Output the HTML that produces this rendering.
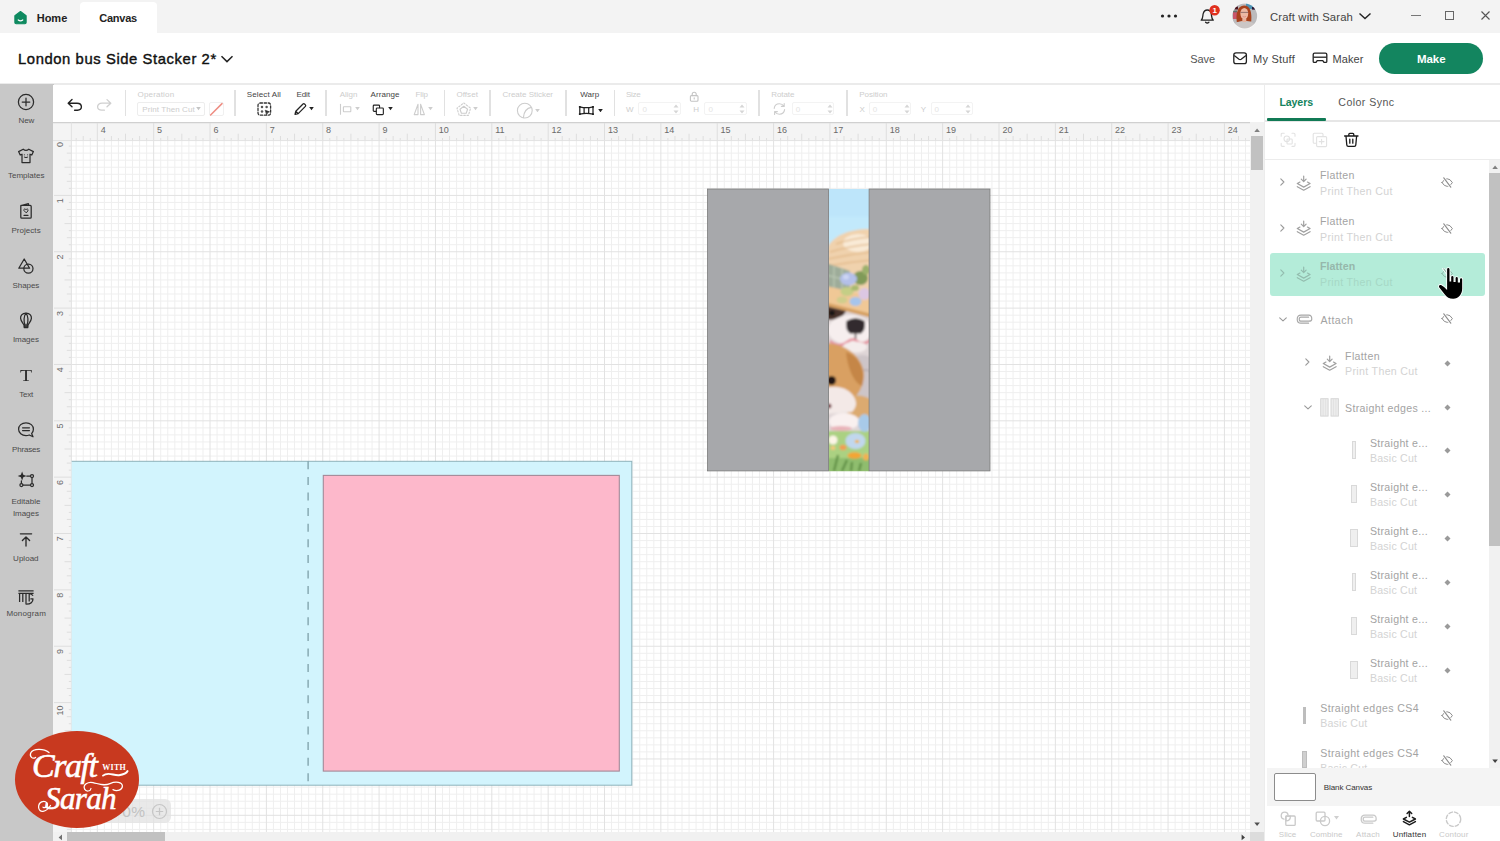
<!DOCTYPE html>
<html><head><meta charset="utf-8"><title>Design Space</title>
<style>
*{box-sizing:border-box;margin:0;padding:0}
html,body{width:1500px;height:841px;overflow:hidden;background:#fff;font-family:"Liberation Sans",sans-serif;color:#333}
div,svg{position:absolute}
.t{white-space:nowrap;line-height:1}
#titlebar{left:0;top:0;width:1500px;height:33px;background:#f3f3f3}
#tabcanvas{left:80px;top:2px;width:76.8px;height:31px;background:#fff;border-radius:4px 4px 0 0}
#header{left:0;top:33px;width:1500px;height:50px;background:#fff}
#hline{left:0;top:83px;width:1500px;height:2px;background:#ebebeb}
#sidebar{left:0;top:84px;width:53.5px;height:757px;background:#c8c8c8}
#toolbar{left:53px;top:85px;width:1211px;height:37px;background:#fff}
#panel{left:1264px;top:85px;width:236px;height:756px;background:#fff;border-left:1px solid #ececec}
.vd{width:1.5px;background:#e1e1e1;top:92px;height:24px}
</style></head><body>
<div id="titlebar"></div><div id="tabcanvas"></div><div id="header"></div><div id="hline"></div>
<svg style="left:13.3px;top:10.4px" width="15" height="15" viewBox="0 0 16 16"><path d="M8 1.6 L14 6.2 V13.3 Q14 14.6 12.7 14.6 H3.3 Q2 14.6 2 13.3 V6.2 Z" fill="#0f8a60" stroke="#0f8a60" stroke-width="1.2" stroke-linejoin="round"/><path d="M5.6 10.6 Q8 12.4 10.4 10.6" fill="none" stroke="#fff" stroke-width="1.3" stroke-linecap="round"/></svg>
<div class="t" style="left:36.70px;top:13.00px;font-size:11.00px;color:#222;font-weight:bold;letter-spacing:0.010px;">Home</div>
<div class="t" style="left:99.20px;top:13.00px;font-size:11.00px;color:#222;font-weight:bold;letter-spacing:-0.223px;">Canvas</div>
<div class="t" style="left:18.00px;top:52.00px;font-size:14.80px;color:#111;letter-spacing:0.589px;-webkit-text-stroke:0.40px #111;">London bus Side Stacker 2*</div>
<svg style="left:220px;top:54px" width="14" height="10" viewBox="0 0 14 10"><path d="M1.5 2.2 L7 7.6 L12.5 2.2" fill="none" stroke="#222" stroke-width="1.5"/></svg>
<svg style="left:1160px;top:13px" width="20" height="6"><circle cx="2.5" cy="3" r="1.6" fill="#222"/><circle cx="9" cy="3" r="1.6" fill="#222"/><circle cx="15.5" cy="3" r="1.6" fill="#222"/></svg>
<svg style="left:1198px;top:4px" width="26" height="24" viewBox="0 0 26 24"><path d="M3.2 16.2 C5.2 14.5 4.6 11.5 5.2 9.6 C5.9 7.2 7.4 6 9.2 6 C11.6 6 13 7.6 13.3 9.8 C13.6 12 13.4 14.6 15.3 16.2 Z" fill="none" stroke="#222" stroke-width="1.3" stroke-linejoin="round"/><path d="M7.6 18.2 Q9.2 19.8 10.9 18.2" fill="none" stroke="#222" stroke-width="1.3" stroke-linecap="round"/><circle cx="16.6" cy="6.2" r="5.2" fill="#e0301e"/></svg>
<div class="t" style="left:1212.60px;top:7.00px;font-size:8.00px;color:#fff;font-weight:bold;">1</div>
<svg style="left:1231px;top:2px" width="28" height="28" viewBox="1231 2 28 28"><defs><clipPath id="av"><circle cx="1244.7" cy="16" r="12.5"/></clipPath><filter id="avb" x="-20%" y="-20%" width="140%" height="140%"><feGaussianBlur stdDeviation="0.55"/></filter></defs><circle cx="1244.7" cy="16" r="13.1" fill="#fafafa"/><g clip-path="url(#av)"><g filter="url(#avb)"><rect x="1231" y="2" width="28" height="28" fill="#bcbbbd"/><rect x="1246" y="3" width="9" height="6" fill="#4f93b4"/><rect x="1233" y="12" width="5" height="7" fill="#c9566b"/><rect x="1234.500" y="6.500" width="3.500" height="3" fill="#4a1522"/><rect x="1252" y="7" width="3" height="2.600" fill="#2a1430"/><rect x="1233" y="10.500" width="4" height="1.800" fill="#5f6f6a"/><path d="M1236.800 22 C1235.600 14 1237.500 5.500 1244 5.500 C1250.500 5.500 1252 13 1251.200 21.500 Z" fill="#a8421e"/><ellipse cx="1244.300" cy="13.600" rx="3.900" ry="5.700" fill="#ecb9a3"/><path d="M1240.600 12.400 H1248" stroke="#8a6a66" stroke-width="0.900"/><path d="M1242.600 16.400 Q1244.300 17.600 1246 16.400" stroke="#d98a86" stroke-width="0.800" fill="none"/><path d="M1232 30 C1233 23 1238 21 1244.500 21 C1251 21 1256 23 1257.500 30 Z" fill="#cbc6c5"/><path d="M1242.300 19 H1246.300 V22 H1242.300 Z" fill="#e6b29d"/></g></g></svg>
<div class="t" style="left:1270.00px;top:12.00px;font-size:11.30px;color:#444;letter-spacing:0.124px;">Craft with Sarah</div>
<svg style="left:1358px;top:11px" width="14" height="10" viewBox="0 0 14 10"><path d="M1.5 2.4 L7 7.6 L12.5 2.4" fill="none" stroke="#222" stroke-width="1.4"/></svg>
<div style="left:1411px;top:15px;width:10px;height:1px;background:#777"></div>
<div style="left:1445px;top:11px;width:9px;height:9px;border:1px solid #666"></div>
<svg style="left:1480px;top:10px" width="11" height="11"><path d="M1.5 1.5 L9.5 9.5 M9.5 1.5 L1.5 9.5" stroke="#555" stroke-width="1.1"/></svg>
<div class="t" style="left:1190.30px;top:54.00px;font-size:11.00px;color:#555;letter-spacing:-0.093px;">Save</div>
<svg style="left:1232px;top:50px" width="16" height="16" viewBox="0 0 16 16"><rect x="1.8" y="2.8" width="12.6" height="10.8" rx="2.2" fill="none" stroke="#222" stroke-width="1.3"/><path d="M2.200 5.400 L7 9.200 Q8.100 9.900 9.200 9.200 L14 5.400" fill="none" stroke="#222" stroke-width="1.3"/></svg>
<div class="t" style="left:1253.00px;top:54.00px;font-size:11.00px;color:#444;letter-spacing:0.232px;">My Stuff</div>
<svg style="left:1312px;top:51px" width="16" height="14" viewBox="0 0 16 14"><path d="M2.6 2.2 H13.4 Q14.8 2.2 14.8 3.6 V10.4 Q14.8 11.4 13.8 11.4 H12 L10.8 9.6 H5.2 L4 11.4 H2.2 Q1.2 11.4 1.2 10.4 V3.6 Q1.2 2.2 2.6 2.2 Z" fill="none" stroke="#222" stroke-width="1.3" stroke-linejoin="round"/><path d="M1.4 6.2 H14.6" stroke="#222" stroke-width="1.3"/></svg>
<div class="t" style="left:1332.50px;top:54.00px;font-size:11.00px;color:#444;letter-spacing:0.087px;">Maker</div>
<div style="left:1379px;top:43px;width:104px;height:31px;border-radius:16px;background:#13855f"></div>
<div class="t" style="left:1417.00px;top:54.00px;font-size:11.50px;color:#fff;font-weight:bold;letter-spacing:-0.067px;">Make</div>
<div id="sidebar"></div>
<svg style="left:17px;top:93px" width="18" height="18" viewBox="0 0 18 18" fill="none" stroke="#2b2b2b" stroke-width="1.25" stroke-linecap="round" stroke-linejoin="round"><circle cx="9" cy="9" r="7.6"/><path d="M9 5.2V12.8M5.2 9H12.8"/></svg>
<div class="t" style="left:18.60px;top:117.00px;font-size:8.00px;color:#4a4a4a;letter-spacing:-0.101px;">New</div>
<svg style="left:17px;top:147px" width="18" height="18" viewBox="0 0 18 18" fill="none" stroke="#2b2b2b" stroke-width="1.25" stroke-linecap="round" stroke-linejoin="round"><path d="M6.2 2.2 L1.6 4.6 L3.2 8 L5 7.2 V15.6 H13 V7.2 L14.8 8 L16.4 4.6 L11.8 2.2 Q9 4.4 6.2 2.2 Z"/><path d="M7.4 7.8v.1M10.6 7.8v.1M7.4 10.2 Q9 11.2 10.6 10.2" stroke-width="1"/></svg>
<div class="t" style="left:7.90px;top:172.00px;font-size:8.00px;color:#4a4a4a;letter-spacing:0.027px;">Templates</div>
<svg style="left:18px;top:202px" width="16" height="18" viewBox="0 0 16 18" fill="none" stroke="#2b2b2b" stroke-width="1.25" stroke-linecap="round" stroke-linejoin="round"><path d="M3 3.6 L10.4 1.6 L10.6 3.2 M3 3.4 H12.2 Q13.2 3.4 13.2 4.4 V15.2 Q13.2 16.2 12.2 16.2 H3.8 Q2.8 16.2 2.8 15.2 V3.6"/><path d="M8 10.6 L6 8.6 Q5.4 7.4 6.6 7 Q7.6 6.9 8 7.8 Q8.4 6.9 9.4 7 Q10.6 7.4 10 8.6 Z" stroke-width="1"/><path d="M6 13.4 H10" stroke-width="1.1"/></svg>
<div class="t" style="left:11.40px;top:227.00px;font-size:8.00px;color:#4a4a4a;letter-spacing:0.050px;">Projects</div>
<svg style="left:17px;top:257px" width="18" height="18" viewBox="0 0 18 18" fill="none" stroke="#2b2b2b" stroke-width="1.25" stroke-linecap="round" stroke-linejoin="round"><path d="M7.2 2 L1.8 11.2 H12.6 Z"/><circle cx="11.4" cy="11.6" r="4.6"/></svg>
<div class="t" style="left:12.60px;top:282.00px;font-size:8.00px;color:#4a4a4a;letter-spacing:-0.072px;">Shapes</div>
<svg style="left:18px;top:312px" width="16" height="18" viewBox="0 0 16 18" fill="none" stroke="#2b2b2b" stroke-width="1.25" stroke-linecap="round" stroke-linejoin="round"><path d="M8 1.2 C3.8 1.2 2.4 4.2 2.6 6.4 C2.9 9.4 5 11 6 13 H10 C11 11 13.100 9.4 13.4 6.4 C13.600 4.200 12.200 1.2 8 1.2 Z"/><path d="M8 1.4 C5.600 3.400 5.600 9.600 7 13 M8 1.4 C10.4 3.4 10.4 9.600 9 13"/><path d="M6.2 13 V15.6 H9.8 V13" /><path d="M6.200 14.400 H9.800" stroke-width="1"/></svg>
<div class="t" style="left:12.90px;top:336.00px;font-size:8.00px;color:#4a4a4a;letter-spacing:-0.039px;">Images</div>
<div class="t" style="left:19.700px;top:367px;font-family:'Liberation Serif',serif;font-size:17px;color:#2b2b2b;transform:scaleX(1.160);transform-origin:0 0">T</div>
<div class="t" style="left:19.30px;top:391.00px;font-size:8.00px;color:#4a4a4a;letter-spacing:-0.218px;">Text</div>
<svg style="left:17px;top:421px" width="18" height="18" viewBox="0 0 18 18" fill="none" stroke="#2b2b2b" stroke-width="1.25" stroke-linecap="round" stroke-linejoin="round"><path d="M9 1.8 C4.6 1.8 1.6 4.6 1.6 8.2 C1.6 11.8 4.8 14.6 9 14.6 C10.2 14.6 11.2 14.4 12.2 14 L16 15.8 L14.6 12.600 C15.800 11.400 16.400 9.900 16.400 8.200 C16.400 4.600 13.400 1.800 9 1.800 Z"/><path d="M5.6 6.800 H12.400 M5.600 9.600 H12.400" stroke-width="1.3"/></svg>
<div class="t" style="left:12.10px;top:446.00px;font-size:8.00px;color:#4a4a4a;letter-spacing:-0.207px;">Phrases</div>
<svg style="left:17px;top:471px" width="18" height="18" viewBox="0 0 18 18" fill="none" stroke="#2b2b2b" stroke-width="1.25" stroke-linecap="round" stroke-linejoin="round"><path d="M4.400 9.800 V14 M4.400 14 H15 M15 14 V5 M15 5 H9.800"/><circle cx="4.400" cy="14" r="1.500" fill="#c8c8c8"/><circle cx="15" cy="14" r="1.500" fill="#c8c8c8"/><circle cx="15" cy="5" r="1.500" fill="#c8c8c8"/><path d="M5.100 0.600 L6.300 3.800 L9.500 5 L6.300 6.200 L5.100 9.400 L3.900 6.200 L0.700 5 L3.900 3.800 Z" fill="#2b2b2b" stroke="none"/></svg>
<div class="t" style="left:11.40px;top:498.00px;font-size:8.00px;color:#4a4a4a;letter-spacing:0.011px;">Editable</div>
<div class="t" style="left:12.90px;top:510.00px;font-size:8.00px;color:#4a4a4a;letter-spacing:-0.039px;">Images</div>
<svg style="left:18px;top:532px" width="16" height="16" viewBox="0 0 16 16" fill="none" stroke="#2b2b2b" stroke-width="1.25" stroke-linecap="round" stroke-linejoin="round"><path d="M2.400 1.800 H13.600 M8 14 V5.2 M4.400 8.600 L8 5 L11.600 8.600" stroke-width="1.35"/></svg>
<div class="t" style="left:13.10px;top:555.00px;font-size:8.00px;color:#4a4a4a;letter-spacing:0.025px;">Upload</div>
<svg style="left:17px;top:589px" width="18" height="17" viewBox="0 0 18 17" fill="none" stroke="#2b2b2b" stroke-width="1.25" stroke-linecap="round" stroke-linejoin="round"><path d="M1.4 1.800 H16.600 M1.400 4.400 H16.600 M2.600 4.400 V13 M5.800 4.400 V13 M9 4.400 V15.400" stroke-linecap="butt"/><path d="M16 6.800 C15 5 13.400 4.600 12.200 4.600 M12.200 4.500 V12.600 M9.200 15.200 C13.400 15.200 16 13 16 9.800 H13.400" stroke-linecap="butt"/></svg>
<div class="t" style="left:6.40px;top:610.00px;font-size:8.00px;color:#4a4a4a;letter-spacing:0.170px;">Monogram</div>
<div id="toolbar"></div>
<div class="vd" style="left:124.5px;top:90px;height:26px"></div>
<div class="vd" style="left:234px;top:90px;height:26px"></div>
<div class="vd" style="left:325px;top:90px;height:26px"></div>
<div class="vd" style="left:443.5px;top:90px;height:26px"></div>
<div class="vd" style="left:489px;top:90px;height:26px"></div>
<div class="vd" style="left:565px;top:90px;height:26px"></div>
<div class="vd" style="left:613.5px;top:90px;height:26px"></div>
<div class="vd" style="left:758.2px;top:90px;height:26px"></div>
<div class="vd" style="left:846px;top:90px;height:26px"></div>
<svg style="left:66px;top:97px" width="18" height="16" viewBox="0 0 18 16" fill="none" stroke="#222" stroke-width="1.4" stroke-linecap="round" stroke-linejoin="round"><path d="M6 2.600 L2.200 6.200 L6 9.800 M2.600 6.200 H11 C13.800 6.200 15.400 7.800 15.400 9.800 C15.400 11.800 13.800 13.200 11.400 13.200 H8.600"/></svg>
<svg style="left:95px;top:97px" width="18" height="16" viewBox="0 0 18 16" fill="none" stroke="#cfcfcf" stroke-width="1.3" stroke-linecap="round" stroke-linejoin="round"><path d="M12 2.600 L15.800 6.200 L12 9.800 M15.400 6.200 H7 C4.200 6.200 2.600 7.800 2.600 9.800 C2.600 11.800 4.200 13.200 6.600 13.200 H9.400"/></svg>
<div class="t" style="left:137.60px;top:91.00px;font-size:8.00px;color:#cdcdcd;letter-spacing:0.174px;">Operation</div>
<div style="left:137px;top:101.5px;width:68px;height:14.5px;border:1px solid #ededed;border-radius:2px"></div>
<div class="t" style="left:142.30px;top:106.00px;font-size:8.00px;color:#cdcdcd;letter-spacing:0.076px;">Print Then Cut</div>
<svg style="left:195.9px;top:107px" width="5" height="3.5"><path d="M0.200 0H4.800L2.500 3.300Z" fill="#c4c4c4"/></svg>
<div style="left:209px;top:101.500px;width:14.500px;height:14.500px;border:1px solid #f0f0f0;border-radius:2px"></div>
<svg style="left:209px;top:101.5px" width="14.5" height="14.5" viewBox="0 0 14.5 14.5" fill="none" stroke="#ee8d83" stroke-width="1.5" stroke-linecap="round" stroke-linejoin="round"><path d="M1.600 13 L13 1.600"/></svg>
<div class="t" style="left:246.80px;top:91.00px;font-size:8.00px;color:#444;letter-spacing:0.129px;">Select All</div>
<svg style="left:256.5px;top:102px" width="16" height="14.5" viewBox="0 0 16 14.5" fill="none" stroke="#333" stroke-width="1.2" stroke-linecap="round" stroke-linejoin="round"><rect x="1" y="1" width="12.600" height="12.200" rx="2.200" stroke-dasharray="2.300 1.700" stroke-width="1.300"/><circle cx="5" cy="5" r="1.250" fill="#555" stroke="none"/><circle cx="9.600" cy="5" r="1.250" fill="#555" stroke="none"/><circle cx="5" cy="9.400" r="1.250" fill="#555" stroke="none"/><path d="M8.600 8.400 L12.400 9.800 L10.600 10.600 L9.800 12.400 Z" fill="#222" stroke-width="0.800"/></svg>
<div class="t" style="left:296.40px;top:91.00px;font-size:8.00px;color:#444;letter-spacing:-0.071px;">Edit</div>
<svg style="left:293px;top:102px" width="15" height="14" viewBox="0 0 15 14" fill="none" stroke="#222" stroke-width="1.25" stroke-linecap="round" stroke-linejoin="round"><path d="M2 12.400 L2.800 9.200 L10 2 Q10.800 1.200 11.800 2.200 L12.200 2.600 Q13.200 3.600 12.400 4.400 L5.200 11.600 Z M2.800 9.200 L5.200 11.600"/></svg>
<svg style="left:309px;top:107.4px" width="5" height="3.5"><path d="M0.200 0H4.800L2.500 3.300Z" fill="#222"/></svg>
<div class="t" style="left:339.80px;top:91.00px;font-size:8.00px;color:#cdcdcd;letter-spacing:-0.038px;">Align</div>
<svg style="left:339px;top:103px" width="14" height="13" viewBox="0 0 14 13" fill="none" stroke="#cdcdcd" stroke-width="1.1" stroke-linecap="round" stroke-linejoin="round"><path d="M1.500 1.400 V11.200"/><rect x="4.400" y="3.800" width="7.400" height="5" rx="0.500"/></svg>
<svg style="left:354.9px;top:107.3px" width="5" height="3.5"><path d="M0.200 0H4.800L2.500 3.300Z" fill="#cdcdcd"/></svg>
<div class="t" style="left:370.60px;top:91.00px;font-size:8.00px;color:#444;letter-spacing:0.063px;">Arrange</div>
<svg style="left:371.8px;top:103.6px" width="14" height="13" viewBox="0 0 14 13" fill="none" stroke="#222" stroke-width="1.25" stroke-linecap="round" stroke-linejoin="round"><g transform="scale(0.9)"><path d="M4.400 8.200 H2.400 Q1.400 8.200 1.400 7.200 V2.200 Q1.400 1.200 2.400 1.200 H7.400 Q8.400 1.200 8.400 2.200 V4"/><rect x="4.800" y="4.400" width="7.800" height="7.400" rx="1"/></g></svg>
<svg style="left:387.5px;top:107.4px" width="5" height="3.5"><path d="M0.200 0H4.800L2.500 3.300Z" fill="#222"/></svg>
<div class="t" style="left:415.60px;top:91.00px;font-size:8.00px;color:#cdcdcd;letter-spacing:-0.173px;">Flip</div>
<svg style="left:412.5px;top:103px" width="13" height="13" viewBox="0 0 13 13" fill="none" stroke="#cdcdcd" stroke-width="1.1" stroke-linecap="round" stroke-linejoin="round"><path d="M5 1.200 V11.600 H1.200 Z M7.600 1.200 V11.600 H11.400 Z"/></svg>
<svg style="left:427.8px;top:107.3px" width="5" height="3.5"><path d="M0.200 0H4.800L2.500 3.300Z" fill="#cdcdcd"/></svg>
<div class="t" style="left:456.40px;top:91.00px;font-size:8.00px;color:#cdcdcd;letter-spacing:0.067px;">Offset</div>
<svg style="left:456px;top:102px" width="16" height="14.5" viewBox="0 0 16 14.5" fill="none" stroke="#cdcdcd" stroke-width="1.1" stroke-linecap="round" stroke-linejoin="round"><path d="M7.800 4.200 L11.600 7.200 L10.200 11.200 H5.400 L4 7.200 Z"/><path d="M7.800 1 L14.600 6.200 L12.400 13.400 H3.200 L1 6.200 Z" stroke-dasharray="1.500 1.700"/></svg>
<svg style="left:473.2px;top:107.3px" width="5" height="3.5"><path d="M0.200 0H4.800L2.500 3.300Z" fill="#cdcdcd"/></svg>
<div class="t" style="left:502.50px;top:91.00px;font-size:8.00px;color:#cdcdcd;letter-spacing:-0.013px;">Create Sticker</div>
<svg style="left:515.5px;top:102px" width="18" height="17" viewBox="0 0 18 17" fill="none" stroke="#cdcdcd" stroke-width="1.1" stroke-linecap="round" stroke-linejoin="round"><circle cx="8.800" cy="8.600" r="7.400"/><path d="M15.400 5.400 C11 6 8 9 7.400 15.600"/></svg>
<svg style="left:535.2px;top:108.8px" width="5" height="3.5"><path d="M0.200 0H4.800L2.500 3.300Z" fill="#cdcdcd"/></svg>
<div class="t" style="left:580.20px;top:91.00px;font-size:8.00px;color:#444;letter-spacing:0.046px;">Warp</div>
<svg style="left:578.3px;top:105.4px" width="18" height="12" viewBox="0 0 18 12" fill="none" stroke="#222" stroke-width="1.2" stroke-linecap="round" stroke-linejoin="round"><path d="M1.800 1.800 Q8.400 3.600 15 1.800 V9.200 Q8.400 7.400 1.800 9.200 Z M6.100 2.600 V8.400 M10.700 2.600 V8.400" stroke-width="1.250"/><path d="M0.900 0.900h1.800v1.800h-1.800zM14.100 0.900h1.800v1.800h-1.800zM0.900 8.300h1.800v1.800h-1.800zM14.100 8.300h1.800v1.800h-1.800z" fill="#222" stroke="none"/></svg>
<svg style="left:597.8px;top:108.8px" width="5" height="3.5"><path d="M0.200 0H4.800L2.500 3.300Z" fill="#222"/></svg>
<div class="t" style="left:626.00px;top:91.00px;font-size:8.00px;color:#cdcdcd;letter-spacing:-0.316px;">Size</div>
<div class="t" style="left:626.00px;top:106.00px;font-size:8.00px;color:#cdcdcd;">W</div>
<div style="left:638px;top:102px;width:42.6px;height:12.500px;border:1px solid #f3f3f3;border-radius:2px"></div>
<div class="t" style="left:642.50px;top:106.00px;font-size:8.00px;color:#e4e4e4;">0</div>
<svg style="left:673px;top:103.500px" width="6" height="10"><path d="M0.500 3.600H5.500L3 0.600Z M0.500 6.400H5.500L3 9.400Z" fill="#d6d6d6"/></svg>
<svg style="left:689px;top:91px" width="11" height="11" viewBox="0 0 11 11" fill="none" stroke="#c4c4c4" stroke-width="1.1" stroke-linecap="round" stroke-linejoin="round"><rect x="1.400" y="4.600" width="7.600" height="5.600" rx="1"/><path d="M3.200 4.600 V3.200 Q3.200 1.200 5.200 1.200 Q7.200 1.200 7.200 3.200 V4.600 M5.200 6.800 V8"/></svg>
<div class="t" style="left:693.20px;top:106.00px;font-size:8.00px;color:#cdcdcd;">H</div>
<div style="left:704.2px;top:102px;width:42.5px;height:12.500px;border:1px solid #f3f3f3;border-radius:2px"></div>
<div class="t" style="left:708.60px;top:106.00px;font-size:8.00px;color:#e4e4e4;">0</div>
<svg style="left:739.3px;top:103.500px" width="6" height="10"><path d="M0.500 3.600H5.500L3 0.600Z M0.500 6.400H5.500L3 9.400Z" fill="#d6d6d6"/></svg>
<div class="t" style="left:771.20px;top:91.00px;font-size:8.00px;color:#cdcdcd;letter-spacing:-0.062px;">Rotate</div>
<svg style="left:772px;top:102px" width="15" height="14" viewBox="0 0 15 14" fill="none" stroke="#cdcdcd" stroke-width="1.1" stroke-linecap="round" stroke-linejoin="round"><path d="M2.200 6.400 C2.600 3.600 4.800 1.800 7.400 1.800 C9.400 1.800 11 2.800 12 4.200 M12.200 1.600 V4.400 H9.400 M12.600 7.600 C12.200 10.400 10 12.200 7.400 12.200 C5.400 12.200 3.800 11.200 2.800 9.800 M2.600 12.400 V9.600 H5.400"/></svg>
<div style="left:791.7px;top:102px;width:42.6px;height:12.500px;border:1px solid #f3f3f3;border-radius:2px"></div>
<div class="t" style="left:795.80px;top:106.00px;font-size:8.00px;color:#e4e4e4;">0</div>
<svg style="left:826.9px;top:103.500px" width="6" height="10"><path d="M0.500 3.600H5.500L3 0.600Z M0.500 6.400H5.500L3 9.400Z" fill="#d6d6d6"/></svg>
<div class="t" style="left:859.20px;top:91.00px;font-size:8.00px;color:#cdcdcd;letter-spacing:-0.020px;">Position</div>
<div class="t" style="left:859.50px;top:106.00px;font-size:8.00px;color:#cdcdcd;">X</div>
<div style="left:868.7px;top:102px;width:42.6px;height:12.500px;border:1px solid #f3f3f3;border-radius:2px"></div>
<div class="t" style="left:872.80px;top:106.00px;font-size:8.00px;color:#e4e4e4;">0</div>
<svg style="left:904.3px;top:103.500px" width="6" height="10"><path d="M0.500 3.600H5.500L3 0.600Z M0.500 6.400H5.500L3 9.400Z" fill="#d6d6d6"/></svg>
<div class="t" style="left:920.70px;top:106.00px;font-size:8.00px;color:#cdcdcd;">Y</div>
<div style="left:931.3px;top:102px;width:41.4px;height:12.500px;border:1px solid #f3f3f3;border-radius:2px"></div>
<div class="t" style="left:934.50px;top:106.00px;font-size:8.00px;color:#e4e4e4;">0</div>
<svg style="left:965px;top:103.500px" width="6" height="10"><path d="M0.500 3.600H5.500L3 0.600Z M0.500 6.400H5.500L3 9.400Z" fill="#d6d6d6"/></svg>
<svg style="left:53px;top:122px" width="1197" height="710" viewBox="53 122 1197 710"><defs><clipPath id="cv"><rect x="71.7" y="140.5" width="1178.3" height="691.5"/></clipPath><clipPath id="strip"><rect x="828.6" y="189" width="40.4" height="282.200"/></clipPath><filter id="bl" x="-20%" y="-20%" width="140%" height="140%"><feGaussianBlur stdDeviation="0.9"/></filter><filter id="bl2" x="-20%" y="-20%" width="140%" height="140%"><feGaussianBlur stdDeviation="0.5"/></filter></defs><rect x="53" y="122" width="1197" height="710" fill="#f4f4f4"/><rect x="71.7" y="140.5" width="1178.3" height="691.5" fill="#fff"/><path d="M76.19 140.5V832M83.23 140.5V832M90.28 140.5V832M104.36 140.5V832M111.41 140.5V832M118.45 140.5V832M125.50 140.5V832M132.54 140.5V832M139.59 140.5V832M146.63 140.5V832M160.72 140.5V832M167.76 140.5V832M174.81 140.5V832M181.85 140.5V832M188.90 140.5V832M195.94 140.5V832M202.99 140.5V832M217.07 140.5V832M224.12 140.5V832M231.16 140.5V832M238.21 140.5V832M245.25 140.5V832M252.30 140.5V832M259.34 140.5V832M273.43 140.5V832M280.47 140.5V832M287.52 140.5V832M294.56 140.5V832M301.61 140.5V832M308.65 140.5V832M315.70 140.5V832M329.78 140.5V832M336.83 140.5V832M343.87 140.5V832M350.92 140.5V832M357.96 140.5V832M365.01 140.5V832M372.05 140.5V832M386.14 140.5V832M393.18 140.5V832M400.23 140.5V832M407.27 140.5V832M414.32 140.5V832M421.36 140.5V832M428.41 140.5V832M442.49 140.5V832M449.54 140.5V832M456.58 140.5V832M463.63 140.5V832M470.67 140.5V832M477.72 140.5V832M484.76 140.5V832M498.85 140.5V832M505.89 140.5V832M512.94 140.5V832M519.98 140.5V832M527.03 140.5V832M534.07 140.5V832M541.12 140.5V832M555.20 140.5V832M562.25 140.5V832M569.29 140.5V832M576.34 140.5V832M583.38 140.5V832M590.43 140.5V832M597.47 140.5V832M611.56 140.5V832M618.60 140.5V832M625.65 140.5V832M632.69 140.5V832M639.74 140.5V832M646.78 140.5V832M653.83 140.5V832M667.91 140.5V832M674.96 140.5V832M682.00 140.5V832M689.05 140.5V832M696.09 140.5V832M703.14 140.5V832M710.18 140.5V832M724.27 140.5V832M731.31 140.5V832M738.36 140.5V832M745.40 140.5V832M752.45 140.5V832M759.49 140.5V832M766.54 140.5V832M780.62 140.5V832M787.67 140.5V832M794.71 140.5V832M801.76 140.5V832M808.80 140.5V832M815.85 140.5V832M822.89 140.5V832M836.98 140.5V832M844.02 140.5V832M851.07 140.5V832M858.11 140.5V832M865.16 140.5V832M872.20 140.5V832M879.25 140.5V832M893.33 140.5V832M900.38 140.5V832M907.42 140.5V832M914.47 140.5V832M921.51 140.5V832M928.56 140.5V832M935.60 140.5V832M949.69 140.5V832M956.73 140.5V832M963.78 140.5V832M970.82 140.5V832M977.87 140.5V832M984.91 140.5V832M991.96 140.5V832M1006.04 140.5V832M1013.09 140.5V832M1020.13 140.5V832M1027.18 140.5V832M1034.22 140.5V832M1041.27 140.5V832M1048.31 140.5V832M1062.40 140.5V832M1069.44 140.5V832M1076.49 140.5V832M1083.53 140.5V832M1090.58 140.5V832M1097.62 140.5V832M1104.67 140.5V832M1118.75 140.5V832M1125.80 140.5V832M1132.84 140.5V832M1139.89 140.5V832M1146.93 140.5V832M1153.98 140.5V832M1161.02 140.5V832M1175.11 140.5V832M1182.15 140.5V832M1189.20 140.5V832M1196.24 140.5V832M1203.29 140.5V832M1210.33 140.5V832M1217.38 140.5V832M1231.46 140.5V832M1238.51 140.5V832M1245.55 140.5V832M71.7 146.09H1250M71.7 153.14H1250M71.7 160.18H1250M71.7 167.23H1250M71.7 174.27H1250M71.7 181.32H1250M71.7 188.36H1250M71.7 202.45H1250M71.7 209.49H1250M71.7 216.54H1250M71.7 223.58H1250M71.7 230.63H1250M71.7 237.67H1250M71.7 244.72H1250M71.7 258.80H1250M71.7 265.85H1250M71.7 272.89H1250M71.7 279.94H1250M71.7 286.98H1250M71.7 294.03H1250M71.7 301.07H1250M71.7 315.16H1250M71.7 322.20H1250M71.7 329.25H1250M71.7 336.29H1250M71.7 343.34H1250M71.7 350.38H1250M71.7 357.43H1250M71.7 371.51H1250M71.7 378.56H1250M71.7 385.60H1250M71.7 392.65H1250M71.7 399.69H1250M71.7 406.74H1250M71.7 413.78H1250M71.7 427.87H1250M71.7 434.91H1250M71.7 441.96H1250M71.7 449.00H1250M71.7 456.05H1250M71.7 463.09H1250M71.7 470.14H1250M71.7 484.22H1250M71.7 491.27H1250M71.7 498.31H1250M71.7 505.36H1250M71.7 512.40H1250M71.7 519.45H1250M71.7 526.49H1250M71.7 540.58H1250M71.7 547.62H1250M71.7 554.67H1250M71.7 561.71H1250M71.7 568.76H1250M71.7 575.80H1250M71.7 582.85H1250M71.7 596.93H1250M71.7 603.98H1250M71.7 611.02H1250M71.7 618.07H1250M71.7 625.11H1250M71.7 632.16H1250M71.7 639.20H1250M71.7 653.29H1250M71.7 660.33H1250M71.7 667.38H1250M71.7 674.42H1250M71.7 681.47H1250M71.7 688.51H1250M71.7 695.56H1250M71.7 709.64H1250M71.7 716.69H1250M71.7 723.73H1250M71.7 730.78H1250M71.7 737.82H1250M71.7 744.87H1250M71.7 751.91H1250M71.7 766.00H1250M71.7 773.04H1250M71.7 780.09H1250M71.7 787.13H1250M71.7 794.18H1250M71.7 801.22H1250M71.7 808.27H1250M71.7 822.35H1250M71.7 829.40H1250" stroke="#efefef" stroke-width="1" fill="none"/><path d="M97.32 140.5V832M153.67 140.5V832M210.03 140.5V832M266.38 140.5V832M322.74 140.5V832M379.10 140.5V832M435.45 140.5V832M491.80 140.5V832M548.16 140.5V832M604.51 140.5V832M660.87 140.5V832M717.22 140.5V832M773.58 140.5V832M829.93 140.5V832M886.29 140.5V832M942.64 140.5V832M999.00 140.5V832M1055.36 140.5V832M1111.71 140.5V832M1168.07 140.5V832M1224.42 140.5V832M71.7 195.41H1250M71.7 251.76H1250M71.7 308.12H1250M71.7 364.47H1250M71.7 420.82H1250M71.7 477.18H1250M71.7 533.53H1250M71.7 589.89H1250M71.7 646.25H1250M71.7 702.60H1250M71.7 758.95H1250M71.7 815.31H1250" stroke="#e2e2e2" stroke-width="1" fill="none"/><path d="M53 122.5H1250" stroke="#d0d0d0" stroke-width="1.300"/><path d="M76.19 138V140.6M83.23 136V140.6M90.28 138V140.6M97.32 123V140.6M104.36 138V140.6M111.41 136V140.6M118.45 138V140.6M125.50 133.7V140.6M132.54 138V140.6M139.59 136V140.6M146.63 138V140.6M153.67 123V140.6M160.72 138V140.6M167.76 136V140.6M174.81 138V140.6M181.85 133.7V140.6M188.90 138V140.6M195.94 136V140.6M202.99 138V140.6M210.03 123V140.6M217.07 138V140.6M224.12 136V140.6M231.16 138V140.6M238.21 133.7V140.6M245.25 138V140.6M252.30 136V140.6M259.34 138V140.6M266.38 123V140.6M273.43 138V140.6M280.47 136V140.6M287.52 138V140.6M294.56 133.7V140.6M301.61 138V140.6M308.65 136V140.6M315.70 138V140.6M322.74 123V140.6M329.78 138V140.6M336.83 136V140.6M343.87 138V140.6M350.92 133.7V140.6M357.96 138V140.6M365.01 136V140.6M372.05 138V140.6M379.10 123V140.6M386.14 138V140.6M393.18 136V140.6M400.23 138V140.6M407.27 133.7V140.6M414.32 138V140.6M421.36 136V140.6M428.41 138V140.6M435.45 123V140.6M442.49 138V140.6M449.54 136V140.6M456.58 138V140.6M463.63 133.7V140.6M470.67 138V140.6M477.72 136V140.6M484.76 138V140.6M491.80 123V140.6M498.85 138V140.6M505.89 136V140.6M512.94 138V140.6M519.98 133.7V140.6M527.03 138V140.6M534.07 136V140.6M541.12 138V140.6M548.16 123V140.6M555.20 138V140.6M562.25 136V140.6M569.29 138V140.6M576.34 133.7V140.6M583.38 138V140.6M590.43 136V140.6M597.47 138V140.6M604.51 123V140.6M611.56 138V140.6M618.60 136V140.6M625.65 138V140.6M632.69 133.7V140.6M639.74 138V140.6M646.78 136V140.6M653.83 138V140.6M660.87 123V140.6M667.91 138V140.6M674.96 136V140.6M682.00 138V140.6M689.05 133.7V140.6M696.09 138V140.6M703.14 136V140.6M710.18 138V140.6M717.22 123V140.6M724.27 138V140.6M731.31 136V140.6M738.36 138V140.6M745.40 133.7V140.6M752.45 138V140.6M759.49 136V140.6M766.54 138V140.6M773.58 123V140.6M780.62 138V140.6M787.67 136V140.6M794.71 138V140.6M801.76 133.7V140.6M808.80 138V140.6M815.85 136V140.6M822.89 138V140.6M829.93 123V140.6M836.98 138V140.6M844.02 136V140.6M851.07 138V140.6M858.11 133.7V140.6M865.16 138V140.6M872.20 136V140.6M879.25 138V140.6M886.29 123V140.6M893.33 138V140.6M900.38 136V140.6M907.42 138V140.6M914.47 133.7V140.6M921.51 138V140.6M928.56 136V140.6M935.60 138V140.6M942.64 123V140.6M949.69 138V140.6M956.73 136V140.6M963.78 138V140.6M970.82 133.7V140.6M977.87 138V140.6M984.91 136V140.6M991.96 138V140.6M999.00 123V140.6M1006.04 138V140.6M1013.09 136V140.6M1020.13 138V140.6M1027.18 133.7V140.6M1034.22 138V140.6M1041.27 136V140.6M1048.31 138V140.6M1055.36 123V140.6M1062.40 138V140.6M1069.44 136V140.6M1076.49 138V140.6M1083.53 133.7V140.6M1090.58 138V140.6M1097.62 136V140.6M1104.67 138V140.6M1111.71 123V140.6M1118.75 138V140.6M1125.80 136V140.6M1132.84 138V140.6M1139.89 133.7V140.6M1146.93 138V140.6M1153.98 136V140.6M1161.02 138V140.6M1168.07 123V140.6M1175.11 138V140.6M1182.15 136V140.6M1189.20 138V140.6M1196.24 133.7V140.6M1203.29 138V140.6M1210.33 136V140.6M1217.38 138V140.6M1224.42 123V140.6M1231.46 138V140.6M1238.51 136V140.6M1245.55 138V140.6M68.8 146.09H71.4M66.8 153.14H71.4M68.8 160.18H71.4M64.5 167.23H71.4M68.8 174.27H71.4M66.8 181.32H71.4M68.8 188.36H71.4M54 195.41H71.4M68.8 202.45H71.4M66.8 209.49H71.4M68.8 216.54H71.4M64.5 223.58H71.4M68.8 230.63H71.4M66.8 237.67H71.4M68.8 244.72H71.4M54 251.76H71.4M68.8 258.80H71.4M66.8 265.85H71.4M68.8 272.89H71.4M64.5 279.94H71.4M68.8 286.98H71.4M66.8 294.03H71.4M68.8 301.07H71.4M54 308.12H71.4M68.8 315.16H71.4M66.8 322.20H71.4M68.8 329.25H71.4M64.5 336.29H71.4M68.8 343.34H71.4M66.8 350.38H71.4M68.8 357.43H71.4M54 364.47H71.4M68.8 371.51H71.4M66.8 378.56H71.4M68.8 385.60H71.4M64.5 392.65H71.4M68.8 399.69H71.4M66.8 406.74H71.4M68.8 413.78H71.4M54 420.82H71.4M68.8 427.87H71.4M66.8 434.91H71.4M68.8 441.96H71.4M64.5 449.00H71.4M68.8 456.05H71.4M66.8 463.09H71.4M68.8 470.14H71.4M54 477.18H71.4M68.8 484.22H71.4M66.8 491.27H71.4M68.8 498.31H71.4M64.5 505.36H71.4M68.8 512.40H71.4M66.8 519.45H71.4M68.8 526.49H71.4M54 533.53H71.4M68.8 540.58H71.4M66.8 547.62H71.4M68.8 554.67H71.4M64.5 561.71H71.4M68.8 568.76H71.4M66.8 575.80H71.4M68.8 582.85H71.4M54 589.89H71.4M68.8 596.93H71.4M66.8 603.98H71.4M68.8 611.02H71.4M64.5 618.07H71.4M68.8 625.11H71.4M66.8 632.16H71.4M68.8 639.20H71.4M54 646.25H71.4M68.8 653.29H71.4M66.8 660.33H71.4M68.8 667.38H71.4M64.5 674.42H71.4M68.8 681.47H71.4M66.8 688.51H71.4M68.8 695.56H71.4M54 702.60H71.4M68.8 709.64H71.4M66.8 716.69H71.4M68.8 723.73H71.4M64.5 730.78H71.4M68.8 737.82H71.4M66.8 744.87H71.4M68.8 751.91H71.4M54 758.95H71.4M68.8 766.00H71.4M66.8 773.04H71.4M68.8 780.09H71.4M64.5 787.13H71.4M68.8 794.18H71.4M66.8 801.22H71.4M68.8 808.27H71.4M54 815.31H71.4M68.8 822.35H71.4M66.8 829.40H71.4" stroke="#dedede" stroke-width="1" fill="none"/><path d="M71.4 122.5V832M53 140.6H1250" stroke="#e2e2e2" stroke-width="1" fill="none"/><g font-family="'Liberation Sans',sans-serif" font-size="9" fill="#6a6a6a"><text x="100.7" y="133.3">4</text><text x="157.1" y="133.3">5</text><text x="213.4" y="133.3">6</text><text x="269.8" y="133.3">7</text><text x="326.1" y="133.3">8</text><text x="382.5" y="133.3">9</text><text x="438.8" y="133.3">10</text><text x="495.2" y="133.3">11</text><text x="551.6" y="133.3">12</text><text x="607.9" y="133.3">13</text><text x="664.3" y="133.3">14</text><text x="720.6" y="133.3">15</text><text x="777.0" y="133.3">16</text><text x="833.3" y="133.3">17</text><text x="889.7" y="133.3">18</text><text x="946.0" y="133.3">19</text><text x="1002.4" y="133.3">20</text><text x="1058.8" y="133.3">21</text><text x="1115.1" y="133.3">22</text><text x="1171.5" y="133.3">23</text><text x="1227.8" y="133.3">24</text><text transform="translate(62.6 141.9) rotate(-90)" text-anchor="end">0</text><text transform="translate(62.6 198.2) rotate(-90)" text-anchor="end">1</text><text transform="translate(62.6 254.6) rotate(-90)" text-anchor="end">2</text><text transform="translate(62.6 310.9) rotate(-90)" text-anchor="end">3</text><text transform="translate(62.6 367.3) rotate(-90)" text-anchor="end">4</text><text transform="translate(62.6 423.6) rotate(-90)" text-anchor="end">5</text><text transform="translate(62.6 480.0) rotate(-90)" text-anchor="end">6</text><text transform="translate(62.6 536.3) rotate(-90)" text-anchor="end">7</text><text transform="translate(62.6 592.7) rotate(-90)" text-anchor="end">8</text><text transform="translate(62.6 649.0) rotate(-90)" text-anchor="end">9</text><text transform="translate(62.6 705.4) rotate(-90)" text-anchor="end">10</text><text transform="translate(62.6 761.8) rotate(-90)" text-anchor="end">11</text></g><g clip-path="url(#cv)"><rect x="20" y="461.3" width="611.8" height="323.9" fill="#d2f4fd" stroke="#8eb2bb" stroke-width="1"/><path d="M308.1 461.3V785.2" stroke="#7d9fa8" stroke-width="1.3" stroke-dasharray="8 7.6" fill="none"/><rect x="323.3" y="475.4" width="296" height="295.7" fill="#fdb8cb" stroke="#a48a98" stroke-width="1.100"/><g clip-path="url(#strip)"><g filter="url(#bl)"><rect x="826" y="187" width="46" height="286" fill="#c2e9fb"/><rect x="826" y="187" width="46" height="30" fill="#bde5fa"/><path d="M826 250 C832 236 848 228.500 872 229 V300 H826 Z" fill="#f0d2ad"/><ellipse cx="858" cy="243" rx="15" ry="9" fill="#f9ead6"/><path d="M830 252 Q850 246 872 244 M828 259 Q850 254 872 252 M836 244 Q853 238 872 237 M828 266 Q850 262 872 260" stroke="#dfb686" stroke-width="1.600" fill="none" opacity="0.750"/><path d="M826 263 L850 271 L850 292 L826 287 Z" fill="#9dac99"/><path d="M834 266 V290 M842 268 V291 M826 275 L850 281" stroke="#b7c4b1" stroke-width="1.500" fill="none"/><path d="M826 286 L872 296 L872 318 L826 305 Z" fill="#f0c896"/><path d="M826 302.500 L872 314 L872 319 L826 307.500 Z" fill="#d6a062"/><ellipse cx="860.500" cy="278" rx="7.500" ry="7" fill="#809a58"/><ellipse cx="866" cy="270" rx="4" ry="5" fill="#9bb06c"/><ellipse cx="847" cy="291.500" rx="6.500" ry="4.500" fill="#c4ce86"/><ellipse cx="842" cy="300" rx="5.500" ry="3.500" fill="#cfcd8c"/><ellipse cx="855" cy="288" rx="4" ry="3" fill="#a9ba70"/><ellipse cx="848.500" cy="279" rx="8.500" ry="6.500" fill="#b4c0e9"/><ellipse cx="846" cy="277" rx="3" ry="2.500" fill="#cdd6f3"/><ellipse cx="864.500" cy="294" rx="6" ry="6" fill="#dcc7e3"/><ellipse cx="855.500" cy="301.500" rx="6" ry="4.500" fill="#a6c5ec"/><path d="M826 306 L872 318 V436 H826 Z" fill="#dfd6d7"/><path d="M826 306 L846 311 Q842 320 826 320 Z" fill="#46302a"/><ellipse cx="832" cy="313" rx="3" ry="2.500" fill="#191313"/><ellipse cx="850" cy="330" rx="22" ry="15" fill="#f6eeee"/><path d="M846.500 321 Q855.500 315.500 864.500 321 Q866 330 861 333.500 H850 Q845 330 846.500 321 Z" fill="#332b2d"/><path d="M855.500 333 V339" stroke="#4a3d3f" stroke-width="1.500"/><path d="M830 341 Q839 349 848 341.500 Q852 338 856 340.500 Q863 347 872 339" stroke="#e6929e" stroke-width="2.600" fill="none"/><ellipse cx="855" cy="347" rx="12" ry="5.500" fill="#f4edec"/><path d="M852 358 Q862 352 872 358 V400 H856 Z" fill="#cdc5c8"/><path d="M858 372 Q866 368 872 372" stroke="#b4abaf" stroke-width="1.500" fill="none"/><path d="M826 343 C846 344 862 356 864 374 C864 384 860 392 854 398 L826 402 Z" fill="#d9a062"/><path d="M846 352 C860 356 866 372 862 386 C856 384 848 372 846 352 Z" fill="#c58646"/><path d="M846 398 Q860 392 872 400 V418 H848 Z" fill="#dcaa70"/><path d="M826 388 Q842 384 852 394 Q860 404 852 412 L826 414 Z" fill="#f3e9e7"/><ellipse cx="831.500" cy="380.500" rx="4.500" ry="4.500" fill="#241815"/><ellipse cx="829" cy="406" rx="2.500" ry="2.500" fill="#7d4e52"/><ellipse cx="844" cy="421.500" rx="15" ry="8.500" fill="#f9f0ef"/><ellipse cx="841" cy="428.500" rx="11" ry="2.600" fill="#e9b3b9"/><rect x="826" y="431" width="46" height="42" fill="#abd182"/><rect x="826" y="458" width="46" height="16" fill="#8fbd6e"/><ellipse cx="864.500" cy="423" rx="6.500" ry="9" fill="#a8cae9"/><ellipse cx="855.500" cy="441" rx="10" ry="8" fill="#c1d7ed"/><ellipse cx="857" cy="441.500" rx="2.200" ry="1.800" fill="#efb24d"/><ellipse cx="833" cy="440" rx="4.500" ry="4.500" fill="#fcf5e6"/><ellipse cx="843" cy="447.500" rx="3.500" ry="2.800" fill="#f19f55"/><ellipse cx="833" cy="448" rx="2.500" ry="2" fill="#f6c77c"/><ellipse cx="854.500" cy="455.500" rx="7" ry="3.300" fill="#f3a536"/><ellipse cx="866" cy="457" rx="3" ry="3.500" fill="#f3b052"/><path d="M834 471 L838 455 M842 471 L847 460 M859 471 L861 463 M851 471 L852 462" stroke="#5f8f45" stroke-width="2.200"/></g></g><rect x="707.6" y="189" width="120.9" height="281.9" fill="#a7a8ab" stroke="#7a7a7a" stroke-width="0.8"/><rect x="869.1" y="189" width="120.9" height="281.9" fill="#a7a8ab" stroke="#7a7a7a" stroke-width="0.8"/></g></svg>
<div style="left:1250px;top:122px;width:14px;height:710px;background:#f1f1f1"></div>
<div style="left:1251px;top:136px;width:12px;height:33.500px;background:#c1c1c1"></div>
<svg style="left:1253.700px;top:127.500px" width="7" height="5"><path d="M0.300 4H5.900L3.100 0.600Z" fill="#808080"/></svg>
<svg style="left:1253.700px;top:821.500px" width="7" height="5"><path d="M0.300 0.600H5.900L3.100 4Z" fill="#505050"/></svg>
<div style="left:53px;top:832px;width:1197px;height:9px;background:#f1f1f1"></div>
<div style="left:67px;top:832px;width:98px;height:9px;background:#c1c1c1"></div>
<svg style="left:58px;top:833.500px" width="5" height="7"><path d="M4 0.500V6.300L0.600 3.400Z" fill="#707070"/></svg>
<svg style="left:1241px;top:833.500px" width="5" height="7"><path d="M0.600 0.500V6.300L4 3.400Z" fill="#404040"/></svg>
<div style="left:1250px;top:832px;width:14px;height:9px;background:#dcdcdc"></div>
<div id="panel"></div>
<div class="t" style="left:1279.40px;top:97.00px;font-size:10.60px;color:#15835d;font-weight:bold;letter-spacing:-0.097px;">Layers</div>
<div class="t" style="left:1338.30px;top:97.00px;font-size:10.60px;color:#555;letter-spacing:0.436px;">Color Sync</div>
<div style="left:1265px;top:120px;width:235px;height:1.5px;background:#e6e6e6"></div>
<div style="left:1266.500px;top:118.400px;width:59.200px;height:2.600px;background:#117a55;border-radius:1px"></div>
<svg style="left:1280px;top:132px" width="17" height="16" viewBox="0 0 17 16" fill="none" stroke="#e2e2e2" stroke-width="1.1" stroke-linecap="round" stroke-linejoin="round"><path d="M1.200 4.200 V2.400 Q1.200 1.200 2.400 1.200 H4.200 M12 1.200 H13.800 Q15 1.200 15 2.400 V4.200 M15 11.400 V13.200 Q15 14.400 13.800 14.400 H12 M4.200 14.400 H2.400 Q1.200 14.400 1.200 13.200 V11.400"/><circle cx="6.800" cy="6.800" r="2.800"/><rect x="7" y="7" width="5.200" height="5" rx="0.800"/></svg>
<svg style="left:1312px;top:132px" width="16" height="16" viewBox="0 0 16 16" fill="none" stroke="#e2e2e2" stroke-width="1.1" stroke-linecap="round" stroke-linejoin="round"><path d="M4.400 11.200 H2.200 Q1.200 11.200 1.200 10.200 V2.200 Q1.200 1.200 2.200 1.200 H10 Q11 1.200 11 2.200 V4.200"/><rect x="4.600" y="4.600" width="10" height="10" rx="1"/><path d="M9.600 7.200 V12 M7.200 9.600 H12"/></svg>
<svg style="left:1343px;top:132px" width="17" height="16" viewBox="0 0 17 16" fill="none" stroke="#1a1a1a" stroke-width="1.3" stroke-linecap="round" stroke-linejoin="round"><path d="M1.600 4 H15 M5.800 3.800 V2.400 Q5.800 1.400 6.800 1.400 H9.800 Q10.800 1.400 10.800 2.400 V3.800 M3 4.200 L3.800 13 Q3.900 14.400 5.300 14.400 H11.300 Q12.700 14.400 12.800 13 L13.600 4.200 M6.800 7.200 V11.200 M9.800 7.200 V11.200"/></svg>
<div style="left:1265px;top:158.500px;width:235px;height:1px;background:#ececec"></div>
<div style="left:1270px;top:252.500px;width:214.600px;height:43.500px;background:#b4ecd9;border-radius:3px"></div>
<svg style="left:1279px;top:177.1px" width="7" height="10" viewBox="0 0 7 10" fill="none" stroke="#9a9a9a" stroke-width="1.1" stroke-linecap="round" stroke-linejoin="round"><path d="M1.800 1.900 L4.900 5 L1.800 8.100"/></svg>
<svg style="left:1296.4px;top:174.5px" width="15.4" height="16.5" viewBox="0 0 15.4 16.5" fill="none" stroke="#a0a0a0" stroke-width="1.1" stroke-linecap="round" stroke-linejoin="round"><g transform="scale(1.1)"><path d="M7 1 V5.600 M4.800 3.800 L7 6 L9.200 3.800"/><path d="M3.600 6.400 L1.200 7.800 L7 11 L12.800 7.800 L10.400 6.400"/><path d="M1.200 10.600 L7 13.800 L12.800 10.600"/></g></svg>
<div class="t" style="left:1320.00px;top:170.00px;font-size:10.60px;color:#a3a3a3;letter-spacing:0.342px;">Flatten</div>
<div class="t" style="left:1320.00px;top:186.00px;font-size:10.60px;color:#d3d3d3;letter-spacing:0.332px;">Print Then Cut</div>
<svg style="left:1441px;top:177px" width="12.400" height="11.200" viewBox="0 0 12.400 11.200" fill="none" stroke="#8c8c8c" stroke-width="1.100" stroke-linecap="round" stroke-linejoin="round"><path d="M1 5.600 Q3.200 1.800 6.200 1.800 Q9.200 1.800 11.400 5.600 Q9.200 9.400 6.200 9.400 Q3.200 9.400 1 5.600 Z" stroke-width="1"/><path d="M2.600 0.800 L9.800 10.400" stroke="#fff" stroke-width="2.600"/><path d="M2.800 0.800 L9.800 10.200" stroke-width="1.100"/></svg>
<svg style="left:1279px;top:222.7px" width="7" height="10" viewBox="0 0 7 10" fill="none" stroke="#9a9a9a" stroke-width="1.1" stroke-linecap="round" stroke-linejoin="round"><path d="M1.800 1.900 L4.900 5 L1.800 8.100"/></svg>
<svg style="left:1296.4px;top:220.1px" width="15.4" height="16.5" viewBox="0 0 15.4 16.5" fill="none" stroke="#a0a0a0" stroke-width="1.1" stroke-linecap="round" stroke-linejoin="round"><g transform="scale(1.1)"><path d="M7 1 V5.600 M4.800 3.800 L7 6 L9.200 3.800"/><path d="M3.600 6.400 L1.200 7.800 L7 11 L12.800 7.800 L10.400 6.400"/><path d="M1.200 10.600 L7 13.800 L12.800 10.600"/></g></svg>
<div class="t" style="left:1320.00px;top:216.00px;font-size:10.60px;color:#a3a3a3;letter-spacing:0.342px;">Flatten</div>
<div class="t" style="left:1320.00px;top:232.00px;font-size:10.60px;color:#d3d3d3;letter-spacing:0.332px;">Print Then Cut</div>
<svg style="left:1441px;top:222.8px" width="12.400" height="11.200" viewBox="0 0 12.400 11.200" fill="none" stroke="#8c8c8c" stroke-width="1.100" stroke-linecap="round" stroke-linejoin="round"><path d="M1 5.600 Q3.200 1.800 6.200 1.800 Q9.200 1.800 11.400 5.600 Q9.200 9.400 6.200 9.400 Q3.200 9.400 1 5.600 Z" stroke-width="1"/><path d="M2.600 0.800 L9.800 10.400" stroke="#fff" stroke-width="2.600"/><path d="M2.800 0.800 L9.800 10.200" stroke-width="1.100"/></svg>
<svg style="left:1279px;top:268.2px" width="7" height="10" viewBox="0 0 7 10" fill="none" stroke="#93bcae" stroke-width="1.1" stroke-linecap="round" stroke-linejoin="round"><path d="M1.800 1.900 L4.900 5 L1.800 8.100"/></svg>
<svg style="left:1296.4px;top:265.6px" width="15.4" height="16.5" viewBox="0 0 15.4 16.5" fill="none" stroke="#93bcae" stroke-width="1.1" stroke-linecap="round" stroke-linejoin="round"><g transform="scale(1.1)"><path d="M7 1 V5.600 M4.800 3.800 L7 6 L9.200 3.800"/><path d="M3.600 6.400 L1.200 7.800 L7 11 L12.800 7.800 L10.400 6.400"/><path d="M1.200 10.600 L7 13.800 L12.800 10.600"/></g></svg>
<div class="t" style="left:1320.00px;top:261.00px;font-size:10.60px;color:#96b7ab;font-weight:bold;letter-spacing:0.065px;">Flatten</div>
<div class="t" style="left:1320.00px;top:277.00px;font-size:10.60px;color:#a6d8c6;letter-spacing:0.332px;">Print Then Cut</div>
<svg style="left:1441px;top:268.2px" width="12.400" height="11.200" viewBox="0 0 12.400 11.200" fill="none" stroke="#8fb8aa" stroke-width="1.100" stroke-linecap="round" stroke-linejoin="round"><path d="M1 5.600 Q3.200 1.800 6.200 1.800 Q9.200 1.800 11.400 5.600 Q9.200 9.400 6.200 9.400 Q3.200 9.400 1 5.600 Z" stroke-width="1"/><path d="M2.600 0.800 L9.800 10.400" stroke="#fff" stroke-width="2.600"/><path d="M2.800 0.800 L9.800 10.200" stroke-width="1.100"/></svg>
<svg style="left:1277.6px;top:315.8px" width="10" height="7" viewBox="0 0 10 7" fill="none" stroke="#9a9a9a" stroke-width="1.1" stroke-linecap="round" stroke-linejoin="round"><path d="M1.700 1.800 L5 4.900 L8.300 1.800"/></svg>
<svg style="left:1295.5px;top:313.6px" width="17" height="10.4" viewBox="0 0 17 10.4" fill="none" stroke="#a8a8a8" stroke-width="1.15" stroke-linecap="round" stroke-linejoin="round"><path d="M12.600 3.200 H5 Q3.200 3.200 3.200 5.200 Q3.200 7.200 5 7.200 H12.800 Q15.800 7.200 15.800 5.200 Q15.800 1.200 12.800 1.200 H5 Q1.200 1.200 1.200 5.200 Q1.200 9.200 5 9.200 H12.600"/></svg>
<div class="t" style="left:1320.40px;top:315.00px;font-size:10.60px;color:#a3a3a3;letter-spacing:0.508px;">Attach</div>
<svg style="left:1441.1px;top:313.4px" width="12.400" height="11.200" viewBox="0 0 12.400 11.200" fill="none" stroke="#8c8c8c" stroke-width="1.100" stroke-linecap="round" stroke-linejoin="round"><path d="M1 5.600 Q3.200 1.800 6.200 1.800 Q9.200 1.800 11.400 5.600 Q9.200 9.400 6.200 9.400 Q3.200 9.400 1 5.600 Z" stroke-width="1"/><path d="M2.600 0.800 L9.800 10.400" stroke="#fff" stroke-width="2.600"/><path d="M2.800 0.800 L9.800 10.200" stroke-width="1.100"/></svg>
<svg style="left:1304.1px;top:357.2px" width="7" height="10" viewBox="0 0 7 10" fill="none" stroke="#9a9a9a" stroke-width="1.1" stroke-linecap="round" stroke-linejoin="round"><path d="M1.800 1.900 L4.900 5 L1.800 8.100"/></svg>
<svg style="left:1321.5px;top:354.6px" width="15.4" height="16.5" viewBox="0 0 15.4 16.5" fill="none" stroke="#a0a0a0" stroke-width="1.1" stroke-linecap="round" stroke-linejoin="round"><g transform="scale(1.1)"><path d="M7 1 V5.600 M4.800 3.800 L7 6 L9.200 3.800"/><path d="M3.600 6.400 L1.200 7.800 L7 11 L12.800 7.800 L10.400 6.400"/><path d="M1.200 10.600 L7 13.800 L12.800 10.600"/></g></svg>
<div class="t" style="left:1345.10px;top:351.00px;font-size:10.60px;color:#a3a3a3;letter-spacing:0.342px;">Flatten</div>
<div class="t" style="left:1345.10px;top:366.00px;font-size:10.60px;color:#d3d3d3;letter-spacing:0.332px;">Print Then Cut</div>
<svg style="left:1443.8px;top:359.6px" width="7" height="7"><path d="M3.500 0.500L6.500 3.500L3.500 6.500L0.500 3.500Z" fill="#9a9a9a"/></svg>
<svg style="left:1302.8px;top:404.2px" width="10" height="7" viewBox="0 0 10 7" fill="none" stroke="#9a9a9a" stroke-width="1.1" stroke-linecap="round" stroke-linejoin="round"><path d="M1.700 1.800 L5 4.900 L8.300 1.800"/></svg>
<svg style="left:1319.500px;top:398px" width="20" height="19"><rect x="0.700" y="0.700" width="7.400" height="17.400" fill="#ececec" stroke="#d4d4d4" stroke-width="0.900"/><rect x="11" y="0.700" width="7.400" height="17.400" fill="#ececec" stroke="#d4d4d4" stroke-width="0.900"/><path d="M3.200 1V18M5.600 1V18M13.500 1V18M15.900 1V18" stroke="#dcdcdc" stroke-width="0.600"/></svg>
<div class="t" style="left:1345.10px;top:403.00px;font-size:10.60px;color:#a3a3a3;letter-spacing:0.331px;">Straight edges ...</div>
<svg style="left:1443.8px;top:403.9px" width="7" height="7"><path d="M3.500 0.500L6.500 3.500L3.500 6.500L0.500 3.500Z" fill="#9a9a9a"/></svg>
<div class="t" style="left:1369.90px;top:438.00px;font-size:10.60px;color:#a3a3a3;letter-spacing:0.307px;">Straight e...</div>
<div class="t" style="left:1369.90px;top:453.00px;font-size:10.60px;color:#d3d3d3;letter-spacing:0.227px;">Basic Cut</div>
<svg style="left:1443.8px;top:446.9px" width="7" height="7"><path d="M3.500 0.500L6.500 3.500L3.500 6.500L0.500 3.500Z" fill="#9a9a9a"/></svg>
<div style="left:1352.4px;top:441.1px;width:3.6px;height:18px;background:#efefef;border:1px solid #d9d9d9"></div>
<div class="t" style="left:1369.90px;top:482.00px;font-size:10.60px;color:#a3a3a3;letter-spacing:0.307px;">Straight e...</div>
<div class="t" style="left:1369.90px;top:497.00px;font-size:10.60px;color:#d3d3d3;letter-spacing:0.227px;">Basic Cut</div>
<svg style="left:1443.8px;top:490.94px" width="7" height="7"><path d="M3.500 0.500L6.500 3.500L3.500 6.500L0.500 3.500Z" fill="#9a9a9a"/></svg>
<div style="left:1351.3px;top:485.14px;width:5.7px;height:18px;background:#efefef;border:1px solid #d9d9d9"></div>
<div class="t" style="left:1369.90px;top:526.00px;font-size:10.60px;color:#a3a3a3;letter-spacing:0.307px;">Straight e...</div>
<div class="t" style="left:1369.90px;top:541.00px;font-size:10.60px;color:#d3d3d3;letter-spacing:0.227px;">Basic Cut</div>
<svg style="left:1443.8px;top:534.98px" width="7" height="7"><path d="M3.500 0.500L6.500 3.500L3.500 6.500L0.500 3.500Z" fill="#9a9a9a"/></svg>
<div style="left:1350.2px;top:529.18px;width:8.1px;height:18px;background:#efefef;border:1px solid #d9d9d9"></div>
<div class="t" style="left:1369.90px;top:570.00px;font-size:10.60px;color:#a3a3a3;letter-spacing:0.307px;">Straight e...</div>
<div class="t" style="left:1369.90px;top:585.00px;font-size:10.60px;color:#d3d3d3;letter-spacing:0.227px;">Basic Cut</div>
<svg style="left:1443.8px;top:579.02px" width="7" height="7"><path d="M3.500 0.500L6.500 3.500L3.500 6.500L0.500 3.500Z" fill="#9a9a9a"/></svg>
<div style="left:1352.4px;top:573.22px;width:3.6px;height:18px;background:#efefef;border:1px solid #d9d9d9"></div>
<div class="t" style="left:1369.90px;top:614.00px;font-size:10.60px;color:#a3a3a3;letter-spacing:0.307px;">Straight e...</div>
<div class="t" style="left:1369.90px;top:629.00px;font-size:10.60px;color:#d3d3d3;letter-spacing:0.227px;">Basic Cut</div>
<svg style="left:1443.8px;top:623.06px" width="7" height="7"><path d="M3.500 0.500L6.500 3.500L3.500 6.500L0.500 3.500Z" fill="#9a9a9a"/></svg>
<div style="left:1351.3px;top:617.26px;width:5.7px;height:18px;background:#efefef;border:1px solid #d9d9d9"></div>
<div class="t" style="left:1369.90px;top:658.00px;font-size:10.60px;color:#a3a3a3;letter-spacing:0.307px;">Straight e...</div>
<div class="t" style="left:1369.90px;top:673.00px;font-size:10.60px;color:#d3d3d3;letter-spacing:0.227px;">Basic Cut</div>
<svg style="left:1443.8px;top:667.1px" width="7" height="7"><path d="M3.500 0.500L6.500 3.500L3.500 6.500L0.500 3.500Z" fill="#9a9a9a"/></svg>
<div style="left:1350.2px;top:661.3px;width:8.3px;height:18px;background:#efefef;border:1px solid #d9d9d9"></div>
<div class="t" style="left:1320.20px;top:703.00px;font-size:10.60px;color:#a3a3a3;letter-spacing:0.382px;">Straight edges CS4</div>
<div class="t" style="left:1320.20px;top:718.00px;font-size:10.60px;color:#d3d3d3;letter-spacing:0.215px;">Basic Cut</div>
<div style="left:1303px;top:706.500px;width:2.800px;height:17.200px;background:#bdbdbd"></div>
<svg style="left:1441.3px;top:709.8px" width="12.400" height="11.200" viewBox="0 0 12.400 11.200" fill="none" stroke="#8c8c8c" stroke-width="1.100" stroke-linecap="round" stroke-linejoin="round"><path d="M1 5.600 Q3.200 1.800 6.200 1.800 Q9.200 1.800 11.400 5.600 Q9.200 9.400 6.200 9.400 Q3.200 9.400 1 5.600 Z" stroke-width="1"/><path d="M2.600 0.800 L9.800 10.400" stroke="#fff" stroke-width="2.600"/><path d="M2.800 0.800 L9.800 10.200" stroke-width="1.100"/></svg>
<div class="t" style="left:1320.20px;top:748.00px;font-size:10.60px;color:#a3a3a3;letter-spacing:0.382px;">Straight edges CS4</div>
<div style="left:1264px;top:740px;width:236px;height:28px;overflow:hidden"><div class="t" style="left:56.20px;top:23.00px;font-size:10.60px;color:#d3d3d3;letter-spacing:0.215px;">Basic Cut</div></div>
<div style="left:1301.800px;top:751.200px;width:5.200px;height:17px;background:#cfcfcf;border:1px solid #bdbdbd"></div>
<svg style="left:1441.3px;top:754.7px" width="12.400" height="11.200" viewBox="0 0 12.400 11.200" fill="none" stroke="#8c8c8c" stroke-width="1.100" stroke-linecap="round" stroke-linejoin="round"><path d="M1 5.600 Q3.200 1.800 6.200 1.800 Q9.200 1.800 11.400 5.600 Q9.200 9.400 6.200 9.400 Q3.200 9.400 1 5.600 Z" stroke-width="1"/><path d="M2.600 0.800 L9.800 10.400" stroke="#fff" stroke-width="2.600"/><path d="M2.800 0.800 L9.800 10.200" stroke-width="1.100"/></svg>
<div style="left:1488.500px;top:159.500px;width:11.500px;height:608.500px;background:#f1f1f1"></div>
<div style="left:1489px;top:173.300px;width:11px;height:373px;background:#c1c1c1"></div>
<svg style="left:1491.500px;top:164.500px" width="7" height="5"><path d="M0.300 4H5.900L3.100 0.600Z" fill="#808080"/></svg>
<svg style="left:1491.500px;top:759px" width="7" height="5"><path d="M0.300 0.600H5.900L3.100 4Z" fill="#404040"/></svg>
<div style="left:1267px;top:768px;width:233px;height:38.300px;background:#f4f4f4"></div>
<div style="left:1274px;top:772.800px;width:42px;height:28.200px;background:#fff;border:1px solid #8c8c8c;border-radius:2px"></div>
<div class="t" style="left:1323.80px;top:784.00px;font-size:8.00px;color:#333;letter-spacing:-0.088px;">Blank Canvas</div>
<svg style="left:1279.5px;top:811px" width="17" height="15.5" viewBox="0 0 17 15.5" fill="none" stroke="#c9c9c9" stroke-width="1.3" stroke-linecap="round" stroke-linejoin="round"><path d="M8 3.600 Q7.600 1.200 4.800 1.200 Q1.200 1.200 1.200 4.800 Q1.200 7.800 4 8.200"/><rect x="5.800" y="5" width="9.400" height="9.400" rx="1"/><path d="M6 5.200 H10.400 Q10.400 9.800 6 9.800 Z"/></svg>
<div class="t" style="left:1278.80px;top:831.00px;font-size:8.00px;color:#c9c9c9;letter-spacing:0.032px;">Slice</div>
<svg style="left:1314.5px;top:811px" width="16" height="16" viewBox="0 0 16 16" fill="none" stroke="#c9c9c9" stroke-width="1.3" stroke-linecap="round" stroke-linejoin="round"><rect x="1.200" y="1.200" width="8.800" height="8.800" rx="1"/><circle cx="10" cy="10" r="4.600"/></svg>
<svg style="left:1334px;top:816px" width="5" height="3.500"><path d="M0 0H5L2.500 3.500Z" fill="#cfcfcf"/></svg>
<div class="t" style="left:1309.90px;top:831.00px;font-size:8.00px;color:#c9c9c9;letter-spacing:0.083px;">Combine</div>
<svg style="left:1359.5px;top:813.5px" width="17.5" height="10.4" viewBox="0 0 17.5 10.4" fill="none" stroke="#c9c9c9" stroke-width="1.3" stroke-linecap="round" stroke-linejoin="round"><path d="M12.800 3.200 H5 Q3.200 3.200 3.200 5.200 Q3.200 7.200 5 7.200 H13 Q16.200 7.200 16.200 5.200 Q16.200 1.200 13 1.200 H5 Q1.200 1.200 1.200 5.200 Q1.200 9.200 5 9.200 H12.800"/></svg>
<div class="t" style="left:1356.10px;top:831.00px;font-size:8.00px;color:#c9c9c9;letter-spacing:0.203px;">Attach</div>
<svg style="left:1401.5px;top:809.5px" width="15.5" height="17" viewBox="0 0 15.5 17" fill="none" stroke="#1c1c1c" stroke-width="1.5" stroke-linecap="round" stroke-linejoin="round"><path d="M7.400 6.400 V1.400 M5.100 3.500 L7.400 1.200 L9.700 3.500"/><path d="M4.400 7.400 L1.400 9 L7.400 12.200 L13.400 9 L10.400 7.400"/><path d="M1.400 11.600 L7.400 14.800 L13.400 11.600"/></svg>
<div class="t" style="left:1392.70px;top:831.00px;font-size:8.00px;color:#333;letter-spacing:0.176px;">Unflatten</div>
<svg style="left:1445px;top:810.5px" width="17" height="17" viewBox="0 0 17 17" fill="none" stroke="#c9c9c9" stroke-width="1.4" stroke-linecap="round" stroke-linejoin="round"><circle cx="8.500" cy="8.200" r="7.200" stroke-dasharray="3.600 2.200"/></svg>
<div class="t" style="left:1439.10px;top:831.00px;font-size:8.00px;color:#c9c9c9;letter-spacing:0.134px;">Contour</div>
<div style="left:95px;top:799px;width:76px;height:24px;border-radius:6px;background:rgba(226,226,226,0.75)"></div>
<div class="t" style="left:122.30px;top:804.00px;font-size:15.50px;color:#c2c2c2;letter-spacing:0.249px;">0%</div>
<svg style="left:151px;top:803px" width="17" height="17"><circle cx="8.500" cy="8.500" r="7" fill="none" stroke="#c6c6c6" stroke-width="1.200"/><path d="M8.500 4.800V12.200M4.800 8.500H12.200" stroke="#c6c6c6" stroke-width="1.200"/></svg>
<div style="left:15.200px;top:730.900px;width:123.700px;height:96.800px;border-radius:50%;background:#c8391f"></div>
<div class="t" style="left:32px;top:749px;font-family:'Liberation Serif',serif;font-style:italic;font-size:34px;color:#fff;letter-spacing:-1.460px;-webkit-text-stroke:0.600px #fff">Craft</div>
<div class="t" style="left:45px;top:783px;font-family:'Liberation Serif',serif;font-style:italic;font-size:31px;color:#fff;letter-spacing:-0.613px;-webkit-text-stroke:0.600px #fff">Sarah</div>
<div class="t" style="left:102.300px;top:764px;font-family:'Liberation Serif',serif;font-weight:bold;font-size:8px;color:#fff;letter-spacing:0.250px">WITH</div>
<svg style="left:15px;top:731px" width="125" height="97" viewBox="15 731 125 97" fill="none" stroke="#fff" stroke-width="1.250" stroke-linecap="round"><path d="M103 775.600 C108 771.200 113.500 775.800 119 775.200 C123 774.700 126.600 773.200 127.600 771" stroke-width="1.900"/><path d="M49 752.500 C44 748.600 33.500 748 30.800 752.800 C29.200 756.600 32.600 759.600 35.600 757.400"/><path d="M84.600 789 C82.600 784.600 88 781.400 93 782.600 C100 784.200 104 786.200 110 783.600 C116 781 122.200 782.200 122.400 786 C122.500 790 117 791.600 113 789.600"/><path d="M84.600 789 C86 792 90.500 791.500 91 788.500"/><path d="M50.500 805.500 C46 812.600 39 813.400 38.600 807.200 C38.400 802.200 44 799.400 47 803 C48.600 806 45.200 808.600 43 807.200"/></svg>
<svg style="left:1434px;top:263px" width="34" height="40" viewBox="1434 263 34 40"><path d="M1447.100 269.400 Q1447.100 268.100 1448.300 268.100 Q1449.500 268.100 1449.500 269.400 V281.500 H1451.200 V277.300 Q1451.200 276.100 1452.350 276.100 Q1453.500 276.100 1453.500 277.300 V282 H1455.600 V278.300 Q1455.600 277.100 1456.700 277.100 Q1457.800 277.100 1457.800 278.300 V282.500 H1460 V279.400 Q1460 278.200 1461.100 278.200 Q1462.200 278.200 1462.200 279.400 V288.500 C1462.200 294.500 1458.500 298.700 1453.200 298.700 C1449.200 298.700 1447 297.200 1444.600 294.200 L1439.300 287.500 C1438.300 286.100 1439.500 284.500 1441 285.100 C1443 286 1445.200 288.200 1447.100 290 Z" fill="#000" stroke="#fff" stroke-width="1.700" stroke-linejoin="round" paint-order="stroke"/></svg>
</body></html>
